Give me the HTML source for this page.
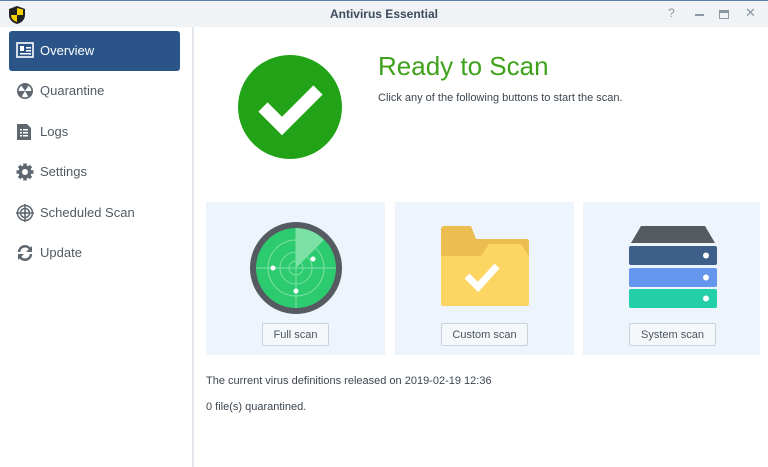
<!DOCTYPE html>
<html><head><style>
body{margin:0;width:768px;height:467px;overflow:hidden;background:#fff;font-family:"Liberation Sans",sans-serif;position:relative}
.title{position:absolute;left:0;top:0;width:768px;height:27px;background:#f0f3f6;border-top:1px solid #5a7fa8;box-sizing:border-box}
.title .t{position:absolute;left:0;width:768px;text-align:center;top:6px;font-size:12px;font-weight:bold;color:#3c4b5c}
.side{position:absolute;left:0;top:27px;width:192px;height:440px;border-right:2px solid #e3e7ec}
.item{position:absolute;left:9px;width:171px;height:40px;font-size:13px;color:#505a64}
.item span{position:absolute;left:31px;top:12px}
.item svg{position:absolute;left:7px;top:11px}
.sel{background:#2b5589;border-radius:3px;color:#fff}
.card{position:absolute;top:202px;height:153px;background:#edf4fb}
.btn{position:absolute;top:323px;height:23px;border:1px solid #cad3dc;background:#f5f8fb;border-radius:2px;font-size:11px;color:#4a5560;text-align:center;line-height:23px;box-sizing:border-box}
.txt{position:absolute;left:206px;font-size:11px;color:#3c4650}
</style></head><body>
<div class="title">
<svg style="position:absolute;left:8px;top:4px" width="18" height="20" viewBox="0 0 18 20"><path d="M9 1 L17 4 V10 C17 15 13 18 9 19 C5 18 1 15 1 10 V4Z" fill="#222"/><path d="M9 3 V10 H15 V4.5Z M9 10 V17 C6 16 3 14 3 10Z" fill="#f4d000"/></svg>
<div class="t">Antivirus Essential</div>
<div style="position:absolute;left:668px;top:5px;font-size:12px;color:#8a96a3">?</div>
<div style="position:absolute;left:695px;top:13px;width:9px;height:2px;background:#8a96a3"></div>
<div style="position:absolute;left:719px;top:9px;width:8px;height:5px;border:1px solid #8a96a3;border-top-width:3px"></div>
<div style="position:absolute;left:745px;top:4px;font-size:13px;color:#8a96a3">✕</div>
</div>
<div class="side">
<div class="item sel" style="top:4px"><svg width="18" height="16" viewBox="0 0 18 16"><rect x="1" y="1" width="16" height="14" fill="none" stroke="#fff" stroke-width="1.6"/><rect x="4" y="4" width="4" height="5" fill="#fff"/><rect x="10" y="5" width="5" height="1.5" fill="#fff"/><rect x="10" y="8" width="5" height="1.5" fill="#fff"/><rect x="4" y="11" width="11" height="1.5" fill="#fff"/></svg><span>Overview</span></div>
<div class="item" style="top:44px"><svg width="18" height="18" viewBox="0 0 18 18"><circle cx="9" cy="9" r="8" fill="#5f6870"/><circle cx="9" cy="9" r="6.3" fill="#fff"/><path d="M9 9 L5 3 A7 7 0 0 1 13 3Z M9 9 L16 9 A7 7 0 0 1 12.5 15Z M9 9 L5.5 15 A7 7 0 0 1 2 9Z" fill="#5f6870"/></svg><span>Quarantine</span></div>
<div class="item" style="top:85px"><svg width="16" height="18" viewBox="0 0 16 18"><path d="M1 1 H11 L15 5 V17 H1Z" fill="#5f6870"/><g fill="#fff"><rect x="4" y="6" width="2" height="1.5"/><rect x="7" y="6" width="5" height="1.5"/><rect x="4" y="9" width="2" height="1.5"/><rect x="7" y="9" width="5" height="1.5"/><rect x="4" y="12" width="2" height="1.5"/><rect x="7" y="12" width="5" height="1.5"/></g></svg><span>Logs</span></div>
<div class="item" style="top:125px"><svg width="18" height="18" viewBox="0 0 18 18"><circle cx="9" cy="9" r="6.5" fill="#5f6870"/><g stroke="#5f6870" stroke-width="3.5"><path d="M9 0.5V17.5M0.5 9H17.5M3 3L15 15M15 3L3 15"/></g><circle cx="9" cy="9" r="3" fill="#fff"/></svg><span>Settings</span></div>
<div class="item" style="top:166px"><svg width="18" height="18" viewBox="0 0 18 18"><g fill="none" stroke="#5f6870" stroke-width="1.5"><circle cx="9" cy="9" r="7.5"/><circle cx="9" cy="9" r="4.5"/><path d="M9 0V18M0 9H18"/></g><circle cx="9" cy="9" r="1.5" fill="#5f6870"/></svg><span>Scheduled Scan</span></div>
<div class="item" style="top:206px"><svg width="18" height="18" viewBox="0 0 18 18"><path d="M3 8 A6 6 0 0 1 14 5" fill="none" stroke="#5f6870" stroke-width="2.5"/><path d="M16 2 V8 H10Z" fill="#5f6870"/><path d="M15 10 A6 6 0 0 1 4 13" fill="none" stroke="#5f6870" stroke-width="2.5"/><path d="M2 16 V10 H8Z" fill="#5f6870"/></svg><span>Update</span></div>
</div>
<svg style="position:absolute;left:238px;top:55px" width="104" height="104" viewBox="0 0 104 104"><circle cx="52" cy="52" r="52" fill="#22a317"/><path d="M25 52 L44 71 L80 35" fill="none" stroke="#fff" stroke-width="13"/></svg>
<div style="position:absolute;left:378px;top:51px;font-size:26px;color:#3fa21c">Ready to Scan</div>
<div style="position:absolute;left:378px;top:92px;font-size:11px;color:#3c4650">Click any of the following buttons to start the scan.</div>
<div class="card" style="left:206px;width:179px"></div>
<div class="card" style="left:395px;width:179px"></div>
<div class="card" style="left:583px;width:177px"></div>
<svg style="position:absolute;left:249px;top:221px" width="94" height="94" viewBox="0 0 94 94"><circle cx="47" cy="47" r="46" fill="#555b60"/><circle cx="47" cy="47" r="40" fill="#2dcb6f"/><path d="M47 47 V7 A40 40 0 0 1 75 19Z" fill="#8ee6b1" opacity=".8"/><g fill="none" stroke="#7fe0a8" stroke-width="1"><circle cx="47" cy="47" r="28"/><circle cx="47" cy="47" r="16"/><circle cx="47" cy="47" r="7"/><path d="M47 7V87M7 47H87"/></g><circle cx="64" cy="38" r="2.5" fill="#fff"/><circle cx="24" cy="47" r="2.5" fill="#fff"/><circle cx="47" cy="70" r="2.5" fill="#fff"/></svg>
<svg style="position:absolute;left:441px;top:226px" width="88" height="80" viewBox="0 0 88 80"><path d="M2 0 H30 L35 13 H86 Q88 13 88 16 V78 H0 V2Z" fill="#ecbd50" /><path d="M0 30 H40 L48 18 H80 L88 30 V78 Q88 80 86 80 H2 Q0 80 0 78Z" fill="#fdd563"/><path d="M26 50 L37 61 L56 40" fill="none" stroke="#fff" stroke-width="7"/></svg>
<svg style="position:absolute;left:629px;top:226px" width="88" height="82" viewBox="0 0 88 82"><path d="M12 0 H76 L86 17 H2Z" fill="#545a5e"/><rect x="0" y="20" width="88" height="19" rx="2" fill="#3e5f89"/><rect x="0" y="42" width="88" height="19" rx="2" fill="#6596ee"/><rect x="0" y="63" width="88" height="19" rx="2" fill="#22cfa8"/><g fill="#fff"><circle cx="77" cy="29.5" r="3"/><circle cx="77" cy="51.5" r="3"/><circle cx="77" cy="72.5" r="3"/></g></svg>
<div class="btn" style="left:262px;width:67px">Full scan</div>
<div class="btn" style="left:441px;width:87px">Custom scan</div>
<div class="btn" style="left:629px;width:87px">System scan</div>
<div class="txt" style="top:375px">The current virus definitions released on 2019-02-19 12:36</div>
<div class="txt" style="top:401px">0 file(s) quarantined.</div>
</body></html>
